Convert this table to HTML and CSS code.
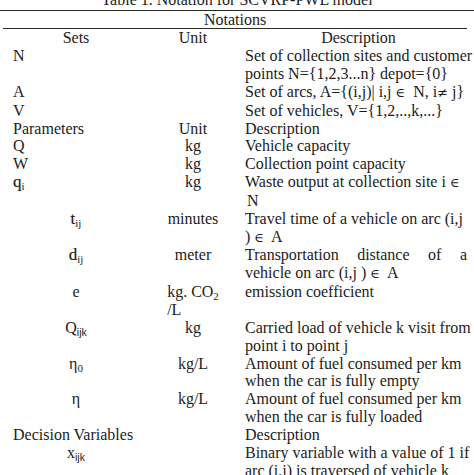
FILE: index.html
```html
<!DOCTYPE html>
<html>
<head>
<meta charset="utf-8">
<link rel="stylesheet" href="styles.css">
</head>
<body>
<div class="page">
  <div class="title">Table 1. Notation for SCVRP-PWL model</div>
  <div class="rule-top"></div>
  <div class="table">
    <div class="caption">Notations</div>
    <div class="grid">
      <div class="c1 center">Sets</div>
      <div class="c2">Unit</div>
      <div class="c3 center">Description</div>

      <div class="c1">N</div>
      <div class="c2"></div>
      <div class="c3"><span class="ln">Set of collection sites and customer</span><span class="ln">points N={1,2,3...n} depot={0}</span></div>

      <div class="c1">A</div>
      <div class="c2"></div>
      <div class="c3"><span class="ln">Set of arcs, A={(i,j)| i,j <span class="m">∈</span>&nbsp; N, i<span class="m">≠</span> j}</span></div>

      <div class="c1">V</div>
      <div class="c2"></div>
      <div class="c3"><span class="ln">Set of vehicles, V={1,2,..,k,...}</span></div>

      <div class="c1">Parameters</div>
      <div class="c2">Unit</div>
      <div class="c3"><span class="ln">Description</span></div>

      <div class="c1">Q</div>
      <div class="c2">kg</div>
      <div class="c3"><span class="ln">Vehicle capacity</span></div>

      <div class="c1">W</div>
      <div class="c2">kg</div>
      <div class="c3"><span class="ln">Collection point capacity</span></div>

      <div class="c1"><span class="v">q</span><sub class="s">i</sub></div>
      <div class="c2">kg</div>
      <div class="c3"><span class="ln">Waste output at collection site i <span class="m">∈</span></span><span class="ln indent">N</span></div>

      <div class="c1 center"><span class="v">t</span><sub class="s">ij</sub></div>
      <div class="c2">minutes</div>
      <div class="c3"><span class="ln">Travel time of a vehicle on arc (i,j</span><span class="ln">) <span class="m">∈</span>&nbsp; A</span></div>

      <div class="c1 center"><span class="v">d</span><sub class="s">ij</sub></div>
      <div class="c2">meter</div>
      <div class="c3"><span class="ln just">Transportation distance of a</span><span class="ln">vehicle on arc (i,j ) <span class="m">∈</span>&nbsp; A</span></div>

      <div class="c1 center">e</div>
      <div class="c2"><span class="unit-wrap">kg. CO<sub class="s2">2</sub><br>/L</span></div>
      <div class="c3"><span class="ln">emission coefficient</span></div>

      <div class="c1 center">Q<sub class="ss">ijk</sub></div>
      <div class="c2">kg</div>
      <div class="c3"><span class="ln">Carried load of vehicle k visit from</span><span class="ln">point i to point j</span></div>

      <div class="c1 center">η<sub class="s2">0</sub></div>
      <div class="c2">kg/L</div>
      <div class="c3"><span class="ln">Amount of fuel consumed per km</span><span class="ln">when the car is fully empty</span></div>

      <div class="c1 center">η</div>
      <div class="c2">kg/L</div>
      <div class="c3"><span class="ln">Amount of fuel consumed per km</span><span class="ln">when the car is fully loaded</span></div>

      <div class="c1">Decision Variables</div>
      <div class="c2"></div>
      <div class="c3"><span class="ln">Description</span></div>

      <div class="c1 center">x<sub class="ss">ijk</sub></div>
      <div class="c2"></div>
      <div class="c3"><span class="ln">Binary variable with a value of 1 if</span><span class="ln">arc (i,j) is traversed of vehicle k</span></div>
    </div>
  </div>
</div>
</body>
</html>
```

FILE: styles.css
```css
html, body {
  margin: 0;
  padding: 0;
  background: #ffffff;
}
body {
  font-family: "Liberation Serif", "Times New Roman", serif;
  font-size: 16px;
  color: #1c1c1c;
}
.page {
  width: 474px;
  height: 475px;
  overflow: hidden;
}
.title {
  margin-top: -9px;
  line-height: 17.85px;
  height: 17.85px;
  text-align: center;
}
.rule-top {
  margin-top: 1.2px;
  border-top: 1.4px solid #2a2a2a;
}
.table {
  margin-left: 3px;
  width: 466px;
}
.caption {
  margin-right: 2px;
  line-height: 17.3px;
  text-align: center;
  border-bottom: 1.3px solid #2a2a2a;
}
.grid {
  display: grid;
  grid-template-columns: 146px 88px 1fr;
  line-height: 17.85px;
}
.c1 {
  padding-left: 10px;
  white-space: nowrap;
}
.c1.center {
  padding-left: 0;
  text-align: center;
}
.c2 {
  text-align: center;
  white-space: nowrap;
}
.c3 {
  padding-left: 8px;
  white-space: nowrap;
}
.c3.center {
  text-align: center;
  padding-left: 8px;
}
.ln {
  display: block;
}
.ln.just {
  text-align: justify;
  text-align-last: justify;
  width: 222px;
}
.ln.indent {
  padding-left: 2px;
}
.m {
  font-family: "DejaVu Serif", serif;
  font-size: 13px;
}
.v {
  font-size: 17px;
  -webkit-text-stroke: 0.2px #1c1c1c;
}
sub {
  line-height: 0;
}
.s {
  font-size: 11px;
  vertical-align: -3px;
}
.ss {
  font-family: "Liberation Sans", Arial, sans-serif;
  font-size: 10.5px;
  vertical-align: -3px;
}
.s2 {
  font-size: 11px;
  vertical-align: -3px;
}
.unit-wrap {
  display: inline-block;
  text-align: left;
}
```
